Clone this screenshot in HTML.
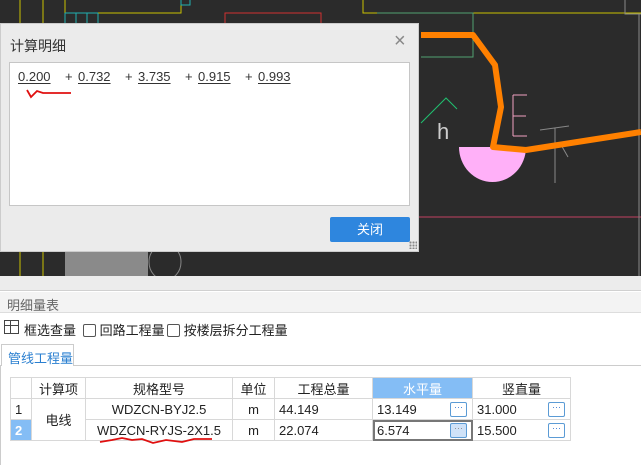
<!DOCTYPE html>
<html><head><meta charset="utf-8"><style>
*{margin:0;padding:0;box-sizing:border-box}
body{width:641px;height:465px;overflow:hidden;background:#2b2b2b;font-family:"Liberation Sans","Noto Sans CJK SC",sans-serif;position:relative}
.abs{position:absolute}
.u{text-decoration:underline;text-underline-offset:2px;position:absolute;top:0}
table{border-collapse:collapse;font-size:13px;color:#222;table-layout:fixed}
td{border:1px solid #d8d8d8;height:21px;padding:0 4px;white-space:nowrap;overflow:hidden}
.btn{position:absolute;right:5px;top:3px;width:17px;height:15px;border:1px solid #5b9bd5;border-radius:2px;font-size:9px;line-height:9px;text-align:center;color:#3a7bd5;background:#fff}
.cb{display:inline-block;width:13px;height:13px;border:1px solid #555;border-radius:2px;vertical-align:-2px}
</style></head><body>
<svg class="abs" style="left:0;top:0" width="641" height="280">
<g fill="none" stroke-width="1">
<path d="M20 0V280M43 0V280" stroke="#c8c000"/>
<path d="M65 0V13H181V0" stroke="#c8c000"/>
<path d="M65 13V23M98 13V23M76 13V23M87 13V23M65 13H98" stroke="#20b0b0"/>
<path d="M181 0V5H190V0" stroke="#20b0b0"/>
<path d="M225 23V13H321V23" stroke="#d03030"/>
<path d="M363 0V13H641" stroke="#c8c000"/>
<path d="M377 13H473V57H421" stroke="#50a070"/>
<path d="M418 217H641" stroke="#c04060"/>
<path d="M421 123L446 98L457 109" stroke="#20c070"/>
<path d="M540 130L569 126M555 128V183M560 143L568 157" stroke="#888"/>
<path d="M513 95V136M513 95H527M513 116H526M513 136H527" stroke="#f0a0c0"/>
<path d="M625 0V14H641M639 14V280" stroke="#888"/>
<ellipse cx="165" cy="262" rx="16" ry="18" stroke="#888"/>
</g>
<text x="437" y="139" fill="#ccc" font-size="22" font-family="Liberation Sans">h</text>
<rect x="65" y="252" width="83" height="28" fill="#8a8a8a"/>
<rect x="456" y="276" width="100" height="4" fill="#606870"/>
<path d="M459 147H526A33.5 35 0 0 1 459 147Z" fill="#ffb0f8"/>
<path d="M421 35H473L495 65L501 107L493 147L526 150L641 132" fill="none" stroke="#ff8000" stroke-width="6" stroke-linejoin="round"/>
</svg>
<div class="abs" style="left:0;top:23px;width:419px;height:229px;background:#ebebeb;border:1px solid #ccc">
<div class="abs" style="left:9px;top:12px;font-size:14px;color:#333">计算明细</div>
<div class="abs" style="left:393px;top:6px;font-size:20px;color:#888">×</div>
<div class="abs" style="left:8px;top:38px;width:401px;height:144px;background:#fff;border:1px solid #c6c6c6">
<div class="abs" style="left:8px;top:6px;font-size:13px;color:#333;width:300px;height:18px">
<span class="u" style="left:0">0.200</span><span class="abs" style="left:47px">+</span>
<span class="u" style="left:60px">0.732</span><span class="abs" style="left:107px">+</span>
<span class="u" style="left:120px">3.735</span><span class="abs" style="left:167px">+</span>
<span class="u" style="left:180px">0.915</span><span class="abs" style="left:227px">+</span>
<span class="u" style="left:240px">0.993</span></div>
<svg class="abs" style="left:15px;top:24px" width="50" height="14"><path d="M2 3L6 10L12 4L18 6H46" stroke="#e01010" stroke-width="1.8" fill="none"/></svg>
</div>
<div class="abs" style="left:329px;top:193px;width:80px;height:25px;background:#2e86de;border-radius:2px;color:#fff;font-size:13px;text-align:center;line-height:25px">关闭</div>
<div class="abs" style="left:408px;top:217px;width:8px;height:8px;background:radial-gradient(#888 1px,transparent 1.2px) 0 0/3px 3px"></div>
</div>
<div class="abs" style="left:0;top:276px;width:641px;height:189px;background:#fff">
<div class="abs" style="left:0;top:0;width:641px;height:15px;background:#ececec;border-bottom:1px solid #d0d0d0"></div>
<div class="abs" style="left:0;top:16px;width:641px;height:21px;background:#f3f3f3;border-bottom:1px solid #ddd;font-size:13px;color:#666;padding:3px 7px">明细量表</div>
<div class="abs" style="left:4px;top:44px;width:15px;height:14px;border:1px solid #444;background:linear-gradient(#444,#444) 0 4px/100% 1px no-repeat,linear-gradient(90deg,#444,#444) 5px 0/1px 100% no-repeat"></div>
<div class="abs" style="left:24px;top:44px;font-size:13px;color:#222;white-space:nowrap">框选查量</div>
<div class="abs" style="left:83px;top:44px;font-size:13px;color:#222;white-space:nowrap"><span class="cb"></span> 回路工程量</div>
<div class="abs" style="left:167px;top:44px;font-size:13px;color:#222;white-space:nowrap"><span class="cb"></span> 按楼层拆分工程量</div>
<div class="abs" style="left:0;top:89px;width:641px;border-top:1px solid #ccc"></div>
<div class="abs" style="left:1px;top:68px;width:73px;height:22px;background:#fff;border:1px solid #ccc;border-bottom:none;font-size:13px;color:#2a7fd0;padding:3px 6px;white-space:nowrap">管线工程量</div>
<div class="abs" style="left:0;top:90px;width:1px;height:99px;background:#ccc"></div>
<table class="abs" style="left:10px;top:101px;width:560px">
<colgroup><col style="width:21px"><col style="width:54px"><col style="width:147px"><col style="width:42px"><col style="width:98px"><col style="width:100px"><col style="width:98px"></colgroup>
<tr style="text-align:center"><td></td><td>计算项</td><td>规格型号</td><td>单位</td><td>工程总量</td><td style="background:#84bdf5;color:#fff">水平量</td><td>竖直量</td></tr>
<tr><td>1</td><td rowspan="2" style="text-align:center">电线</td><td style="text-align:center">WDZCN-BYJ2.5</td><td style="text-align:center">m</td><td>44.149</td><td style="position:relative">13.149<span class="btn">···</span></td><td style="position:relative">31.000<span class="btn">···</span></td></tr>
<tr><td style="background:#84bdf5;color:#fff;font-weight:bold">2</td><td style="text-align:center">WDZCN-RYJS-2X1.5</td><td style="text-align:center">m</td><td>22.074</td><td style="position:relative;outline:2px solid #777;outline-offset:-2px">6.574<span class="btn" style="background:#cfe2f8;color:#888">···</span></td><td style="position:relative">15.500<span class="btn">···</span></td></tr>
</table>
<svg class="abs" style="left:98px;top:160px" width="120" height="12"><path d="M2 6L14 4L24 2L34 4L44 3L55 7L68 4L84 6L96 3L114 3" stroke="#e01010" stroke-width="1.8" fill="none"/></svg>
</div>
</body></html>
